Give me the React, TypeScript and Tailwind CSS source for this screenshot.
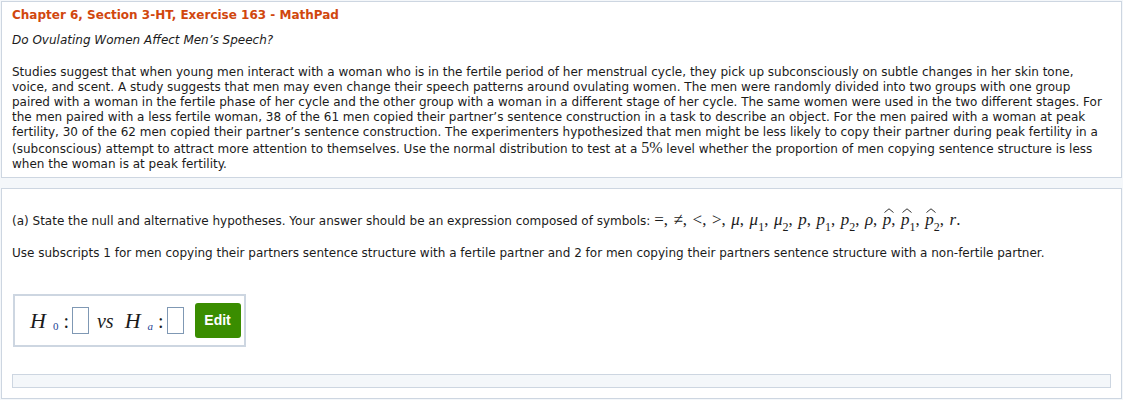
import type { ReactNode } from 'react'

const sans = { fontFamily: '"DejaVu Sans", Verdana, sans-serif' }

function M({ children, size = 'text-[16px]' }: { children: ReactNode; size?: string }) {
  return <span className={`font-['Liberation_Serif',serif] leading-none ${size}`}>{children}</span>
}

function V({ children, sub }: { children: ReactNode; sub?: string }) {
  return (
    <span className="italic">
      {children}
      {sub && <sub className="not-italic text-[12px] align-[-3px] leading-none">{sub}</sub>}
    </span>
  )
}

function Hat({ sub }: { sub?: string }) {
  return (
    <span className="relative inline-block italic leading-none">
      <svg className="absolute left-[1px] -top-[3px]" width="10" height="5" viewBox="0 0 10 5">
        <path d="M0.5 4.5 L5 0.8 L9.5 4.5" fill="none" stroke="#1b1b1b" strokeWidth="0.9" />
      </svg>
      p
      {sub && <sub className="not-italic text-[12px] align-[-3px] leading-none">{sub}</sub>}
    </span>
  )
}

function C() {
  return <span className="mr-[5.5px]">,</span>
}

function Box() {
  return <span className="inline-block w-[17px] h-[27px] border border-[#7f98b4] bg-white align-middle" />
}

export default function App() {
  return (
    <div className="min-h-[400px] bg-[#f4f7fa] pl-[1px] pt-[1px] text-[#1b1b1b]" style={sans}>
      <section className="w-[1121px] h-[177px] bg-white border border-[#cdd6e1] px-[10px] pt-[3px]">
        <h1 className="text-[12px] font-bold text-[#d1470e] leading-[20px]">Chapter 6, Section 3-HT, Exercise 163 - MathPad</h1>
        <p className="mt-[5px] italic text-[12px] leading-[20px]">Do Ovulating Women Affect Men’s Speech?</p>
        <p className="mt-[15px] text-[12px] leading-[15px]">
          Studies suggest that when young men interact with a woman who is in the fertile period of her menstrual cycle, they pick up subconsciously on subtle changes in her skin tone, voice, and scent. A study suggests that men may even change their speech patterns around ovulating women. The men were randomly divided into two groups with one group paired with a woman in the fertile phase of her cycle and the other group with a woman in a different stage of her cycle. The same women were used in the two different stages. For the men paired with a less fertile woman, 38 of the 61 men copied their partner’s sentence construction in a task to describe an object. For the men paired with a woman at peak fertility, 30 of the 62 men copied their partner’s sentence construction. The experimenters hypothesized that men might be less likely to copy their partner during peak fertility in a (subconscious) attempt to attract more attention to themselves. Use the normal distribution to test at a <M>5%</M> level whether the proportion of men copying sentence structure is less when the woman is at peak fertility.
        </p>
      </section>

      <section className="mt-[10px] w-[1121px] h-[211px] bg-white border border-[#cdd6e1] px-[10px] pt-[22px]">
        <p className="text-[12px] leading-[20px]">
          (a) State the null and alternative hypotheses. Your answer should be an expression composed of symbols:{' '}
          <M size="text-[17px]">
            =<C />≠<C />&lt;<C />&gt;<C /><V>μ</V><C /><V sub="1">μ</V><C /><V sub="2">μ</V><C /><V>p</V><C /><V sub="1">p</V><C /><V sub="2">p</V><C /><V>ρ</V><C /><Hat /><C /><Hat sub="1" /><C /><Hat sub="2" /><C /><V>r</V>.
          </M>
        </p>
        <p className="mt-[12px] text-[12px] leading-[20px]">
          Use subscripts 1 for men copying their partners sentence structure with a fertile partner and 2 for men copying their partners sentence structure with a non-fertile partner.
        </p>

        <div className="mt-[31px] ml-[1px] w-[233px] h-[53px] border-2 border-[#cdd6e1] flex items-center pl-[15px] gap-[3px]">
          <span className="font-['Liberation_Serif',serif] italic text-[22px]">H</span>
          <span className="font-['Liberation_Serif',serif] text-[11px] text-[#1c3f94] mt-[12px] ml-[4px]">0</span>
          <span className="font-['Liberation_Serif',serif] text-[20px] ml-[2px]">:</span>
          <Box />
          <span className="font-['Liberation_Serif',serif] italic text-[20px] ml-[5px]">vs</span>
          <span className="font-['Liberation_Serif',serif] italic text-[22px] ml-[8px]">H</span>
          <span className="font-['Liberation_Serif',serif] italic text-[11px] text-[#1c3f94] mt-[12px] ml-[4px]">a</span>
          <span className="font-['Liberation_Serif',serif] text-[20px] ml-[2px]">:</span>
          <Box />
          <button className="ml-[8px] w-[46px] h-[35px] rounded-[3px] bg-[#3a8d00] text-white font-bold text-[14px] font-['Liberation_Sans',sans-serif]">
            Edit
          </button>
        </div>

        <div className="mt-[27px] w-[1099px] h-[14px] bg-[#f4f7fa] border border-[#cdd6e1]" />
      </section>
    </div>
  )
}
